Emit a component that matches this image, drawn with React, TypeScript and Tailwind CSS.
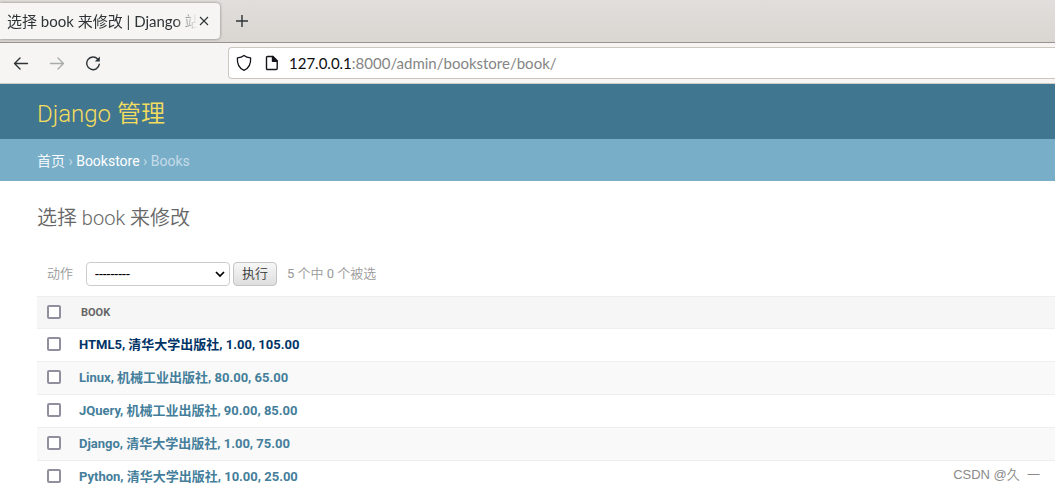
import React from "react";

const books = [
  { id: 5, label: "HTML5, 清华大学出版社, 1.00, 105.00", active: true },
  { id: 4, label: "Linux, 机械工业出版社, 80.00, 65.00" },
  { id: 3, label: "JQuery, 机械工业出版社, 90.00, 85.00" },
  { id: 2, label: "Django, 清华大学出版社, 1.00, 75.00" },
  { id: 1, label: "Python, 清华大学出版社, 10.00, 25.00" },
];

function Check({ label }: { label: string }) {
  return (
    <input
      type="checkbox"
      aria-label={label}
      className="block size-[14px] appearance-none rounded-[2px] border-2 border-[#8f8f9d] bg-white checked:bg-[#417690]"
    />
  );
}

function TabStrip() {
  return (
    <div className="flex h-[43px] shrink-0 border-b border-[#989590] bg-linear-to-b from-[#e1dedb] to-[#dad6d2]">
      <div className="mt-[3px] flex h-9 w-[220px] items-center rounded-r-[4px] bg-[#f6f5f4] pl-[7px] shadow-[0_0_3px_rgba(0,0,0,0.45)]">
        <span className="w-[190px] overflow-hidden text-[15px] leading-6 whitespace-nowrap text-[#2e3436] mask-r-from-88% mask-r-to-100%">
          选择 book 来修改 | Django 站点
        </span>
        <button type="button" aria-label="关闭标签页" className="p-[2px]">
          <svg width="10" height="10" viewBox="0 0 10 10" fill="none" stroke="#2e3436" strokeWidth="1.1">
            <path d="M1 1l8 8M9 1l-8 8" />
          </svg>
        </button>
      </div>
      <button type="button" aria-label="新建标签页" className="ml-3 flex w-5 items-center justify-center">
        <svg width="14" height="14" viewBox="0 0 14 14" fill="none" stroke="#2e3436" strokeWidth="1.4">
          <path d="M7 1v12M1 7h12" />
        </svg>
      </button>
    </div>
  );
}

function Toolbar() {
  return (
    <div className="flex h-[41px] shrink-0 items-center border-b border-[#cfcbc6] bg-[#f6f5f4] pl-[13px]">
      <div className="flex w-[215px] gap-5 text-[#2e3436]">
        <button type="button" aria-label="后退">
          <svg width="16" height="16" viewBox="0 0 16 16" fill="none" stroke="currentColor" strokeWidth="1.4" strokeLinecap="round" strokeLinejoin="round">
            <path d="M14.500 8.500h-13M7 3L1.500 8.500 7 14" />
          </svg>
        </button>
        <button type="button" aria-label="前进" className="text-[#aaabab]">
          <svg width="16" height="16" viewBox="0 0 16 16" fill="none" stroke="currentColor" strokeWidth="1.4" strokeLinecap="round" strokeLinejoin="round">
            <path d="M1.500 8.500h13M9 3L14.500 8.500 9 14" />
          </svg>
        </button>
        <button type="button" aria-label="刷新">
          <svg width="16" height="16" viewBox="0 0 16 16" fill="none" stroke="currentColor" strokeWidth="1.4" strokeLinecap="round">
            <path d="M12.800 4.200A6.300 6.300 0 1 0 14.300 9.200" />
            <path d="M14.800 1.500v5h-5z" fill="currentColor" stroke="none" />
          </svg>
        </button>
      </div>
      <div className="flex h-8 flex-1 items-center rounded-l-[4px] border border-r-0 border-[#cdc7c2] bg-white pl-[7px]">
        <svg width="16" height="18" viewBox="0 0 16 18" fill="none" stroke="#15141a" strokeWidth="1.3" strokeLinejoin="round">
          <path d="M8 1.400C6.400 2.700 4 3.500 1.400 3.800 1 9.500 3 14.300 8 16.400 13 14.300 15 9.500 14.600 3.800 12 3.500 9.600 2.700 8 1.400z" />
        </svg>
        <svg className="ml-3" width="16" height="16" viewBox="0 0 16 16" fill="none" stroke="#15141a" strokeWidth="1.4" strokeLinejoin="round">
          <path d="M3.500 1.500H9l4.200 4.200v7.800a1 1 0 0 1-1 1H3.500a1 1 0 0 1-1-1v-11a1 1 0 0 1 1-1z" />
          <path d="M8.500 1.500v4.700h4.700z" fill="#15141a" />
        </svg>
        <div className="ml-[9px] text-[15px] leading-6 text-[#858585]">
          <span className="text-[#0c0c0d]">127.0.0.1</span>:8000/admin/bookstore/book/
        </div>
      </div>
    </div>
  );
}

export default function App() {
  return (
    <div className="relative flex h-screen flex-col overflow-hidden bg-white font-['Lato','Noto_Sans_CJK_SC',sans-serif]">
      <TabStrip />
      <Toolbar />
      <div className="font-['Roboto','Noto_Sans_CJK_SC',sans-serif]">
        <header className="flex h-[55px] items-center bg-[#417690] px-[37px] pt-1">
          <h1 className="text-[24px] leading-8 font-[350] text-[#f5dd5d]">
            <a href="#admin">Django 管理</a>
          </h1>
        </header>
        <nav className="flex h-[42px] items-center bg-[#79aec8] px-[37px] pt-[2px] text-[14px] leading-5 whitespace-pre text-[#c4dce8]">
          <a href="#home" className="font-[350] text-white">首页</a>
          <span> › </span>
          <a href="#bookstore" className="text-white">Bookstore</a>
          <span> › </span>
          <span>Books</span>
        </nav>
        <main className="pt-[21px] pl-[37px]">
          <h2 className="text-[20px] leading-8 font-[350] text-[#666]">选择 book 来修改</h2>
          <div className="mt-7 flex h-6 items-center pl-[10px] font-['Roboto','Noto_Sans_CJK_SC_DemiLight','Noto_Sans_CJK_SC',sans-serif] text-[13px] text-[#999]">
            <label htmlFor="action">动作</label>
            <div className="relative ml-[13px]">
              <select
                id="action"
                className="block h-6 w-36 appearance-none rounded-[4px] border border-[#ccc] bg-white pl-2 text-[14px] leading-5 text-black"
              >
                <option>---------</option>
                <option>删除所选的 books</option>
              </select>
              <svg className="pointer-events-none absolute top-[9px] right-[5px]" width="10" height="7" viewBox="0 0 10 7" fill="none" stroke="#000" strokeWidth="1.700">
                <path d="M1 1l4 4 4-4" />
              </svg>
            </div>
            <button type="button" className="ml-[3px] h-6 w-11 rounded-[4px] border border-[#c4c4c4] bg-linear-to-b from-[#f7f7f7] to-[#dedede] text-[13px] leading-5 font-[350] text-[#333]">
              执行
            </button>
            <span className="ml-[10px]">5 个中 0 个被选</span>
          </div>
          <table className="mt-[10px] w-full border-collapse text-left">
            <thead>
              <tr className="h-8 border-y border-[#eee] bg-[#f6f6f6]">
                <th className="w-[42px] p-0 pb-[2px] pl-[10px]">
                  <Check label="全选" />
                </th>
                <th className="p-0 pl-[2px] text-[11px] leading-4 font-bold text-[#666] uppercase">Book</th>
              </tr>
            </thead>
            <tbody>
              {books.map((book) => (
                <tr key={book.id} className="h-[33px] border-b border-[#eee] even:bg-[#f9f9f9]">
                  <td className="p-0 pb-[2px] pl-[10px]">
                    <Check label={book.label} />
                  </td>
                  <th className="p-0 text-[13px] leading-5 font-bold">
                    <a href={`#book-${book.id}`} className={book.active ? "text-[#036]" : "text-[#447e9b]"}>
                      {book.label}
                    </a>
                  </th>
                </tr>
              ))}
            </tbody>
          </table>
        </main>
      </div>
      <div className="absolute right-[15px] bottom-[5px] font-['Liberation_Sans','Noto_Sans_CJK_SC',sans-serif] text-[13px] leading-5 font-[350] whitespace-pre text-[#8a8a8a]">
        CSDN @久&nbsp; 一
      </div>
    </div>
  );
}
